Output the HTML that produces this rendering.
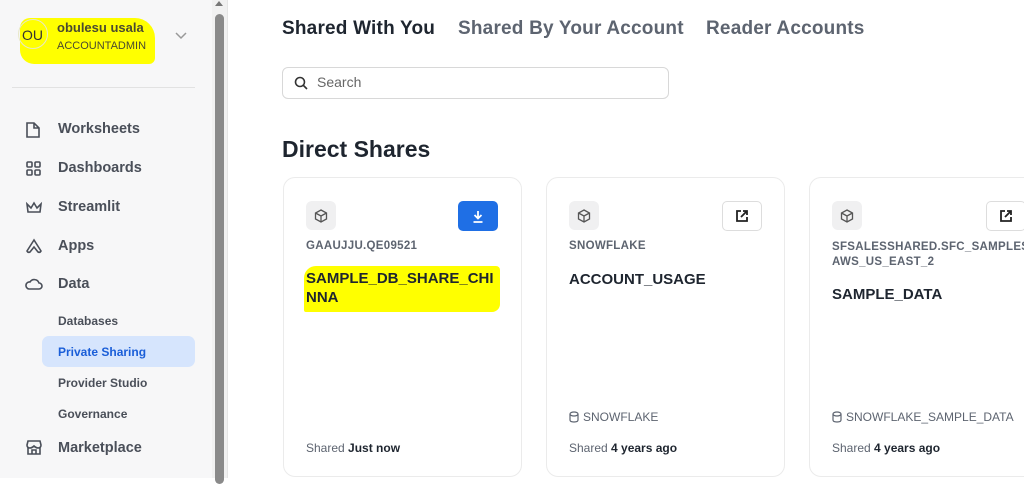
<!DOCTYPE html>
<html><head><style>
*{box-sizing:border-box;margin:0;padding:0}
body{width:1024px;height:478px;overflow:hidden;font-family:"Liberation Sans",sans-serif;background:#fff;position:relative;color:#1e252f}
.sb{position:absolute;left:0;top:0;width:212px;height:478px;background:#f7f7f8}
.scr{position:absolute;left:212px;top:0;width:16px;height:478px;background:#f1f1f1;border-right:1px solid #e5e5e5}
.thumb{position:absolute;left:215px;top:14px;width:9px;height:470px;background:#8a8a8a;border-radius:5px}
.hl{position:absolute;background:#ffff00}
.t{position:absolute;white-space:nowrap}
.nav{font-size:14.5px;font-weight:bold;color:#4a4f59;left:58px}
.sub{font-size:12px;font-weight:bold;color:#4a4f59;left:58px}
.ic{position:absolute;left:25px}
.card{position:absolute;top:177px;width:239px;height:300px;border:1px solid #ebebeb;border-radius:12px;background:#fff}
.ib{position:absolute;top:23px;left:22px;width:30px;height:29px;background:#f0f0f1;border-radius:6px;display:flex;align-items:center;justify-content:center}
.ab{position:absolute;top:23px;width:40px;height:30px;border:1px solid #ddd;border-radius:5px;background:#fff;display:flex;align-items:center;justify-content:center}
.org{position:absolute;left:22px;top:62px;font-size:11.5px;font-weight:bold;color:#5d6470;letter-spacing:.3px}
.nm{position:absolute;left:22px;font-size:15px;font-weight:bold;color:#1e252f;line-height:19px}
.ft{position:absolute;left:22px;top:263px;font-size:12px;color:#5d6470}
.ft b{color:#1e252f}
.db{position:absolute;left:22px;top:232px;font-size:12px;color:#5d6470}
.db svg{vertical-align:-2px;margin-right:4px}
</style></head><body>
<div class="sb">
<div class="hl" style="left:20px;top:18px;width:135px;height:46px;border-radius:10px 20px 6px 14px"></div>
<div style="position:absolute;left:18px;top:19px;width:30px;height:30px;border-radius:50%;border:1px solid #e8e8c8"></div>
<div class="t" style="left:22px;top:27px;font-size:14px;color:#333">OU</div>
<div class="t" style="left:57px;top:20px;font-size:13px;font-weight:bold;color:#4a4a30">obulesu usala</div>
<div class="t" style="left:57px;top:40px;font-size:11px;color:#4a4a30">ACCOUNTADMIN</div>
<svg class="t" style="left:175px;top:32px" width="12" height="8"><path d="M1 1l5 5 5-5" stroke="#999" stroke-width="1.5" fill="none"/></svg>
<div style="position:absolute;left:12px;top:87px;width:183px;height:1px;background:#e2e2e2"></div>
<svg class="ic" style="top:121px" width="16" height="18" fill="none" stroke="#4a4f59" stroke-width="1.6"><path d="M2 2h7l5 5v9H2z M9 2v5h5"/></svg>
<div class="t nav" style="top:121px">Worksheets</div>
<svg class="ic" style="top:160px" width="18" height="18" fill="none" stroke="#4a4f59" stroke-width="1.6"><rect x="2" y="2" width="5" height="5" rx="1"/><rect x="10" y="2" width="5" height="5" rx="1"/><rect x="2" y="10" width="5" height="5" rx="1"/><rect x="10" y="10" width="5" height="5" rx="1"/></svg>
<div class="t nav" style="top:160px">Dashboards</div>
<svg class="ic" style="top:200px" width="18" height="16" fill="none" stroke="#4a4f59" stroke-width="1.6"><path d="M2 4l4 4 3-5 3 5 4-4-1 8H3z"/></svg>
<div class="t nav" style="top:199px">Streamlit</div>
<svg class="ic" style="top:237px" width="18" height="18" fill="none" stroke="#4a4f59" stroke-width="1.6"><path d="M9 3L2 14q1 2 3 1l4-5 4 5q2 1 3-1z"/></svg>
<div class="t nav" style="top:238px">Apps</div>
<svg class="ic" style="top:277px" width="18" height="14" fill="none" stroke="#4a4f59" stroke-width="1.6"><path d="M4 12h10a3 3 0 0 0 0-6 5 5 0 0 0-9-1 3.5 3.5 0 0 0-1 7z"/></svg>
<div class="t nav" style="top:276px">Data</div>
<div class="t sub" style="top:314px">Databases</div>
<div style="position:absolute;left:42px;top:336px;width:153px;height:31px;background:#d6e5fd;border-radius:7px"></div>
<div class="t sub" style="top:345px;color:#1a5ed8">Private Sharing</div>
<div class="t sub" style="top:376px">Provider Studio</div>
<div class="t sub" style="top:407px">Governance</div>
<svg class="ic" style="top:439px" width="18" height="17" fill="none" stroke="#4a4f59" stroke-width="1.6"><path d="M3 2h12l1 4q0 3-3 3-2 0-4-2-2 2-4 2-3 0-3-3z M3 9v6h12V9 M7 15v-4h4v4"/></svg>
<div class="t nav" style="top:440px">Marketplace</div>
</div>
<div class="scr"></div>
<svg class="t" style="left:213px;top:0" width="12" height="6"><path d="M2 6l4-5 4 5z" fill="#777"/></svg>
<div class="thumb"></div>

<div class="t" style="left:282px;top:18px;font-size:19px;font-weight:bold;color:#1e252f;letter-spacing:.2px">Shared With You</div>
<div class="t" style="left:458px;top:18px;font-size:19px;font-weight:bold;color:#5d6470;letter-spacing:.2px">Shared By Your Account</div>
<div class="t" style="left:706px;top:18px;font-size:19px;font-weight:bold;color:#5d6470;letter-spacing:.2px">Reader Accounts</div>
<div style="position:absolute;left:282px;top:67px;width:387px;height:32px;border:1px solid #d8d8d8;border-radius:6px"></div>
<svg class="t" style="left:294px;top:76px" width="14" height="14" fill="none" stroke="#333" stroke-width="1.6"><circle cx="6" cy="6" r="4.5"/><path d="M9.5 9.5l3.5 3.5"/></svg>
<div class="t" style="left:317px;top:74px;font-size:14px;color:#666">Search</div>
<div class="t" style="left:282px;top:136px;font-size:23px;font-weight:bold;color:#1e252f">Direct Shares</div>

<div class="card" style="left:283px">
<div class="ib"><svg width="14" height="14" fill="none" stroke="#555" stroke-width="1.3"><path d="M7 1l5.5 3v6L7 13 1.5 10V4z M1.5 4L7 7l5.5-3 M7 7v6"/></svg></div>
<div class="ab" style="left:174px;background:#1f6fe5;border-color:#1f6fe5"><svg width="12" height="13" fill="none" stroke="#fff" stroke-width="1.8"><path d="M6 1v7 M2.5 5l3.5 3.5L9.5 5 M1.5 12h9"/></svg></div>
<div class="org">GAAUJJU.QE09521</div>
<div class="hl" style="left:20px;top:88px;width:196px;height:46px;border-radius:12px 4px 8px 2px"></div>
<div class="nm" style="top:91px">SAMPLE_DB_SHARE_CHI<br>NNA</div>
<div class="ft">Shared <b>Just now</b></div>
</div>
<div class="card" style="left:546px">
<div class="ib"><svg width="14" height="14" fill="none" stroke="#555" stroke-width="1.3"><path d="M7 1l5.5 3v6L7 13 1.5 10V4z M1.5 4L7 7l5.5-3 M7 7v6"/></svg></div>
<div class="ab" style="left:175px"><svg width="14" height="14" fill="none" stroke="#222" stroke-width="1.8"><path d="M6 2H2v10h10V8 M8 2h4v4 M12 2L6 8"/></svg></div>
<div class="org">SNOWFLAKE</div>
<div class="nm" style="top:92px">ACCOUNT_USAGE</div>
<div class="db"><svg width="10" height="12" fill="none" stroke="#5d6470" stroke-width="1.2"><ellipse cx="5" cy="3" rx="4" ry="2"/><path d="M1 3v6q0 2 4 2t4-2V3"/></svg>SNOWFLAKE</div>
<div class="ft">Shared <b>4 years ago</b></div>
</div>
<div class="card" style="left:809px;width:240px">
<div class="ib"><svg width="14" height="14" fill="none" stroke="#555" stroke-width="1.3"><path d="M7 1l5.5 3v6L7 13 1.5 10V4z M1.5 4L7 7l5.5-3 M7 7v6"/></svg></div>
<div class="ab" style="left:176px"><svg width="14" height="14" fill="none" stroke="#222" stroke-width="1.8"><path d="M6 2H2v10h10V8 M8 2h4v4 M12 2L6 8"/></svg></div>
<div class="org" style="line-height:15px">SFSALESSHARED.SFC_SAMPLES_<br>AWS_US_EAST_2</div>
<div class="nm" style="top:107px">SAMPLE_DATA</div>
<div class="db"><svg width="10" height="12" fill="none" stroke="#5d6470" stroke-width="1.2"><ellipse cx="5" cy="3" rx="4" ry="2"/><path d="M1 3v6q0 2 4 2t4-2V3"/></svg>SNOWFLAKE_SAMPLE_DATA</div>
<div class="ft">Shared <b>4 years ago</b></div>
</div>
</body></html>
